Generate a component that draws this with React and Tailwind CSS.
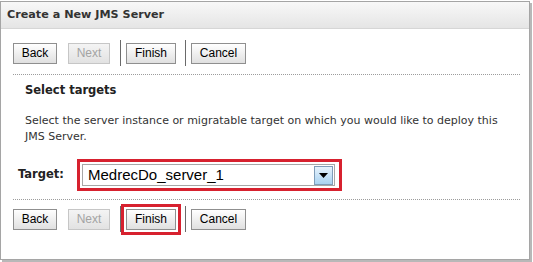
const TAHOMA = "font-['DejaVu_Sans',Tahoma,sans-serif]"

function Btn({ label, disabled, w, highlight }) {
  return (
    <div
      className={`h-[21px] ${w} flex items-center justify-center border text-[12px] font-['Liberation_Sans',Arial,sans-serif] ${
        disabled
          ? 'border-[#c6c6c6] bg-gradient-to-b from-[#f4f4f4] to-[#e2e2e2] text-[#a3a3a3]'
          : 'border-[#8f8f8f] bg-gradient-to-b from-[#ffffff] to-[#e0e0e0] text-black'
      } ${highlight ? 'outline-[3px] outline-solid outline-offset-[2px] outline-[#d7212f]' : ''}`}
    >
      {label}
    </div>
  )
}

function Sep() {
  return <div className="w-px h-[26px] bg-[#6a6a6a]" />
}

function ButtonBar({ highlight }) {
  return (
    <div className="flex items-center h-[26px]">
      <Btn label="Back" w="w-[44px]" />
      <div className="ml-[11px]">
        <Btn label="Next" w="w-[42px]" disabled />
      </div>
      <div className="ml-[10px]">
        <Sep />
      </div>
      <div className="ml-[5px]">
        <Btn label="Finish" w="w-[50px]" highlight={highlight} />
      </div>
      <div className="ml-[9px]">
        <Sep />
      </div>
      <div className="ml-[5px]">
        <Btn label="Cancel" w="w-[55px]" />
      </div>
    </div>
  )
}

export default function App() {
  return (
    <div className="w-[533px] h-[262px] bg-white">
      <div className="w-[530px] h-[259px] mt-[1px] border border-[#a5a5a5] shadow-[2px_2px_0_#b8b8b8] flex flex-col">
        <div
          className={`h-[27px] shrink-0 flex items-center pl-[6px] bg-gradient-to-b from-[#f8f8f8] to-[#e5e5e5] border-b border-[#d6d6d6] text-[11.2px] font-bold text-[#333] ${TAHOMA}`}
        >
          Create a New JMS Server
        </div>

        <div className="pl-[12px] pr-[9px]">
          <div className="mt-[11px]">
            <ButtonBar />
          </div>
          <div className="mt-[8px] border-t border-dotted border-[#9c9c9c]" />

          <div className={`pl-[12px] pt-[7px] text-[11px] text-[#222] ${TAHOMA}`}>
            <div className="font-bold leading-[16px] text-[11.5px]">Select targets</div>
            <div className="mt-[15px] leading-[16px] text-[#333]">
              Select the server instance or migratable target on which you would like to deploy this
              JMS Server.
            </div>
          </div>

          <div className="mt-[14px] flex items-center">
            <div className={`w-[64px] pl-[5px] text-[11.5px] font-bold text-[#222] ${TAHOMA}`}>Target:</div>
            <div className="border-[3px] border-[#d7212f] p-[2px] pr-[4px]">
              <div className="w-[253px] h-[22px] border border-[#a7a7a7] flex items-center justify-between pl-[5px] pr-[1px]">
                <span className="text-[15px] font-['Liberation_Sans',Arial,sans-serif] text-black">
                  MedrecDo_server_1
                </span>
                <div className="w-[19px] h-[19px] border border-[#7f9db9] bg-gradient-to-b from-[#e6f2fb] to-[#a9d3f2] flex items-center justify-center">
                  <svg width="9" height="5" viewBox="0 0 9 5">
                    <path d="M0 0h9L4.5 5z" fill="#000" />
                  </svg>
                </div>
              </div>
            </div>
          </div>

          <div className="mt-[8px] border-t border-dotted border-[#9c9c9c]" />
          <div className="mt-[6px]">
            <ButtonBar highlight />
          </div>
        </div>
      </div>
    </div>
  )
}
